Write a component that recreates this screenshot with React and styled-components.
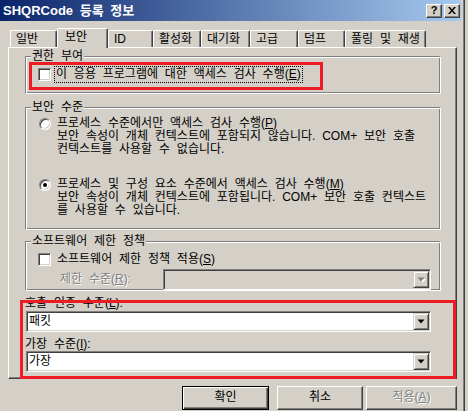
import React from 'react';
import styled, { createGlobalStyle } from 'styled-components';

const GlobalStyle = createGlobalStyle`
  html, body {
    margin: 0;
    padding: 0;
    background: #d4d0c8;
  }
  body {
    font-family: "Liberation Sans", "Noto Sans CJK KR", sans-serif;
    font-size: 12px;
    word-spacing: 3.5px;
    color: #000;
  }
`;

const Window = styled.div`
  position: relative;
  width: 465px;
  height: 411px;
  overflow: hidden;
  background: #d4d0c8;
  box-shadow: inset -1px 0 #404040, inset -2px 0 #808080;
  display: flex;
  flex-direction: column;
`;

const TitleBar = styled.div`
  box-sizing: border-box;
  width: 461px;
  height: 21px;
  flex: none;
  padding: 0 1px 0 3px;
  background: linear-gradient(to right, #0a246a, #a6caf0);
  display: flex;
  align-items: center;
`;

const Title = styled.span`
  flex: 1;
  color: #fff;
  font-weight: bold;
  font-size: 13px;
  line-height: 14px;
  padding-top: 1px;
  word-spacing: 3px;
`;

const CaptionButton = styled.div`
  box-sizing: border-box;
  width: 16px;
  height: 14px;
  margin-left: ${p => p.$ml || 0}px;
  background: #d4d0c8;
  border: 1px solid;
  border-color: #fff #404040 #404040 #fff;
  box-shadow: inset -1px -1px #808080;
  display: flex;
  align-items: center;
  justify-content: center;
  font: bold 11px "Liberation Sans", sans-serif;
  line-height: 11px;
`;

const TabStrip = styled.div`
  height: 26px;
  flex: none;
  padding-left: 10px;
  display: flex;
  align-items: flex-end;
`;

const Tab = styled.div`
  position: relative;
  z-index: ${p => (p.$active ? 1 : 0)};
  box-sizing: border-box;
  width: ${p => p.$w}px;
  height: ${p => (p.$active ? 20 : 17)}px;
  margin-bottom: ${p => (p.$active ? -1 : 0)}px;
  padding: 0 0 ${p => (p.$active ? 2 : 0)}px ${p => (p.$active ? 7 : 5)}px;
  background: #d4d0c8;
  border-left: 1px solid #fff;
  border-top: 1px solid #fff;
  border-right: 1px solid #404040;
  border-radius: 2px 2px 0 0;
  box-shadow: inset -1px 0 #808080;
  display: flex;
  align-items: center;
  line-height: 13px;
  white-space: nowrap;
`;

const Panel = styled.div`
  box-sizing: border-box;
  width: 449px;
  height: 332px;
  margin-left: 8px;
  padding-left: 16px;
  border-left: 1px solid #fff;
  border-top: 1px solid #fff;
  border-right: 1px solid #404040;
  border-bottom: 1px solid #404040;
  box-shadow: inset -1px -1px #808080;
  display: flex;
  flex-direction: column;
`;

const Group = styled.div`
  position: relative;
  box-sizing: border-box;
  width: 416px;
  height: ${p => p.$h}px;
  margin-top: ${p => p.$mt}px;
  padding-top: ${p => p.$pt}px;
  flex: none;
  border: 1px solid;
  border-color: #808080 #fff #fff #808080;
  box-shadow: inset 1px 1px #fff, inset -1px -1px #808080;
`;

const Legend = styled.span`
  position: absolute;
  top: -7px;
  left: 5px;
  padding: 0 1px;
  background: #d4d0c8;
  line-height: 13px;
  white-space: nowrap;
`;

const CheckRow = styled.div`
  height: 17px;
  padding-left: 12px;
  display: flex;
  align-items: center;
`;

const CheckBox = styled.span`
  box-sizing: border-box;
  width: 13px;
  height: 13px;
  flex: none;
  background: #fff;
  border: 1px solid;
  border-color: #808080 #fff #fff #808080;
  box-shadow: inset 1px 1px #404040, inset -1px -1px #d4d0c8;
`;

const CheckLabel = styled.span`
  margin-left: ${p => (p.$focused ? 3 : 6)}px;
  padding: ${p => (p.$focused ? '1px' : '0')};
  border: ${p => (p.$focused ? '1px dotted #000' : 'none')};
  line-height: 13px;
  white-space: nowrap;
`;

const RadioRow = styled.div`
  margin-top: ${p => p.$mt || 0}px;
  padding-left: 13px;
  display: flex;
  align-items: flex-start;
`;

const Radio = styled.span`
  box-sizing: border-box;
  width: 12px;
  height: 12px;
  margin-top: 1px;
  flex: none;
  border-radius: 50%;
  background: #fff;
  border: 1px solid;
  border-color: #808080 #fff #fff #808080;
  box-shadow: inset 1px 1px #404040, inset -1px -1px #d4d0c8;
  display: flex;
  align-items: center;
  justify-content: center;

  &::after {
    content: '';
    display: ${p => (p.$checked ? 'block' : 'none')};
    width: 4px;
    height: 4px;
    border-radius: 50%;
    background: #000;
  }
`;

const RadioText = styled.div`
  margin-left: 6px;
  line-height: 13px;
  white-space: nowrap;
`;

const FieldRow = styled.div`
  margin-top: 1px;
  display: flex;
  align-items: center;
`;

const FieldLabel = styled.div`
  margin-top: ${p => p.$mt || 0}px;
  margin-left: ${p => p.$ml || 0}px;
  width: ${p => (p.$w ? `${p.$w}px` : 'auto')};
  line-height: 13px;
  white-space: nowrap;
  color: ${p => (p.$disabled ? '#808080' : '#000')};
  text-shadow: ${p => (p.$disabled ? '1px 1px #fff' : 'none')};
`;

const Combo = styled.div`
  box-sizing: border-box;
  width: ${p => p.$w}px;
  height: 21px;
  margin-top: ${p => p.$mt || 0}px;
  margin-left: ${p => p.$ml || 0}px;
  padding: 1px;
  flex: none;
  background: ${p => (p.$disabled ? '#d4d0c8' : '#fff')};
  border: 1px solid;
  border-color: #808080 #fff #fff #808080;
  box-shadow: inset 1px 1px #404040, inset -1px -1px #d4d0c8;
  display: flex;
  align-items: center;
`;

const ComboText = styled.span`
  flex: 1;
  padding-left: 1px;
  line-height: 13px;
`;

const DropButton = styled.span`
  box-sizing: border-box;
  width: 16px;
  height: 17px;
  flex: none;
  background: #d4d0c8;
  border: 1px solid;
  border-color: #d4d0c8 #404040 #404040 #d4d0c8;
  box-shadow: inset 1px 1px #fff, inset -1px -1px #808080;
  display: flex;
  align-items: center;
  justify-content: center;
`;

const ButtonRow = styled.div`
  margin-top: 7px;
  padding-left: 182px;
  display: flex;
`;

const PushButton = styled.div`
  box-sizing: border-box;
  width: ${p => p.$w}px;
  height: 24px;
  margin-left: ${p => p.$ml || 0}px;
  padding-bottom: 2px;
  background: #d4d0c8;
  border: 1px solid;
  border-color: ${p => (p.$default ? '#000' : '#fff #404040 #404040 #fff')};
  box-shadow: ${p =>
    p.$default
      ? 'inset 1px 1px #fff, inset -1px -1px #404040, inset -2px -2px #808080'
      : 'inset -1px -1px #808080'};
  display: flex;
  align-items: center;
  justify-content: center;
  line-height: 13px;
  color: ${p => (p.$disabled ? '#808080' : '#000')};
  text-shadow: ${p => (p.$disabled ? '1px 1px #fff' : 'none')};
`;

const Marker = styled.div`
  position: absolute;
  left: ${p => p.$x}px;
  top: ${p => p.$y}px;
  width: ${p => p.$w}px;
  height: ${p => p.$h}px;
  box-sizing: border-box;
  border: 3px solid #ed1c24;
  pointer-events: none;
`;

function Arrow({ disabled }) {
  return (
    <svg width="9" height="6" viewBox="0 0 9 6">
      {disabled && <path d="M2 2h7L5.5 5.5z" fill="#fff" />}
      <path d="M0.5 0.5h7L4 4.5z" fill={disabled ? '#808080' : '#000'} />
    </svg>
  );
}

function CloseGlyph() {
  return (
    <svg width="8" height="7" viewBox="0 0 8 7">
      <path d="M0 0h2l2 2.5L6 0h2L5 3.5 8 7H6L4 4.5 2 7H0l3-3.5z" fill="#000" />
    </svg>
  );
}

const tabs = [
  { label: '일반', w: 47 },
  { label: '보안', w: 51, active: true },
  { label: 'ID', w: 45 },
  { label: '활성화', w: 48 },
  { label: '대기화', w: 49 },
  { label: '고급', w: 48 },
  { label: '덤프', w: 47 },
  { label: '풀링 및 재생', w: 81 },
];

export default function App() {
  return (
    <>
      <GlobalStyle />
      <Window>
        <TitleBar>
          <Title>SHQRCode 등록 정보</Title>
          <CaptionButton>?</CaptionButton>
          <CaptionButton $ml={2}>
            <CloseGlyph />
          </CaptionButton>
        </TitleBar>

        <TabStrip>
          {tabs.map(t => (
            <Tab key={t.label} $w={t.w} $active={t.active}>
              {t.label}
            </Tab>
          ))}
        </TabStrip>

        <Panel>
          <Group $mt={8} $h={38} $pt={9}>
            <Legend>권한 부여</Legend>
            <CheckRow>
              <CheckBox />
              <CheckLabel $focused>
                이 응용 프로그램에 대한 액세스 검사 수행(<u>E</u>)
              </CheckLabel>
            </CheckRow>
          </Group>

          <Group $mt={13} $h={123} $pt={9}>
            <Legend>보안 수준</Legend>
            <RadioRow>
              <Radio />
              <RadioText>
                프로세스 수준에서만 액세스 검사 수행(<u>P</u>)
                <br />
                보안 속성이 개체 컨텍스트에 포함되지 않습니다. COM+ 보안 호출
                <br />
                컨텍스트를 사용할 수 없습니다.
              </RadioText>
            </RadioRow>
            <RadioRow $mt={22}>
              <Radio $checked />
              <RadioText>
                프로세스 및 구성 요소 수준에서 액세스 검사 수행(<u>M</u>)
                <br />
                보안 속성이 개체 컨텍스트에 포함됩니다. COM+ 보안 호출 컨텍스트
                <br />
                를 사용할 수 있습니다.
              </RadioText>
            </RadioRow>
          </Group>

          <Group $mt={11} $h={50} $pt={9}>
            <Legend>소프트웨어 제한 정책</Legend>
            <CheckRow>
              <CheckBox />
              <CheckLabel>
                소프트웨어 제한 정책 적용(<u>S</u>)
              </CheckLabel>
            </CheckRow>
            <FieldRow>
              <FieldLabel $ml={34} $w={103} $disabled>
                제한 수준(<u>R</u>):
              </FieldLabel>
              <Combo $w={268} $disabled>
                <ComboText />
                <DropButton>
                  <Arrow disabled />
                </DropButton>
              </Combo>
            </FieldRow>
          </Group>

          <FieldLabel $mt={6}>
            호출 인증 수준(<u>L</u>):
          </FieldLabel>
          <Combo $w={405} $ml={1} $mt={1}>
            <ComboText>패킷</ComboText>
            <DropButton>
              <Arrow />
            </DropButton>
          </Combo>

          <FieldLabel $mt={6}>
            가장 수준(<u>I</u>):
          </FieldLabel>
          <Combo $w={405} $ml={1}>
            <ComboText>가장</ComboText>
            <DropButton>
              <Arrow />
            </DropButton>
          </Combo>
        </Panel>

        <ButtonRow>
          <PushButton $w={87} $default>
            확인
          </PushButton>
          <PushButton $w={86} $ml={8}>
            취소
          </PushButton>
          <PushButton $w={91} $ml={3} $disabled>
            적용(<u>A</u>)
          </PushButton>
        </ButtonRow>

        <Marker $x={29} $y={62} $w={294} $h={28} />
        <Marker $x={20} $y={300} $w={436} $h={79} />
      </Window>
    </>
  );
}
